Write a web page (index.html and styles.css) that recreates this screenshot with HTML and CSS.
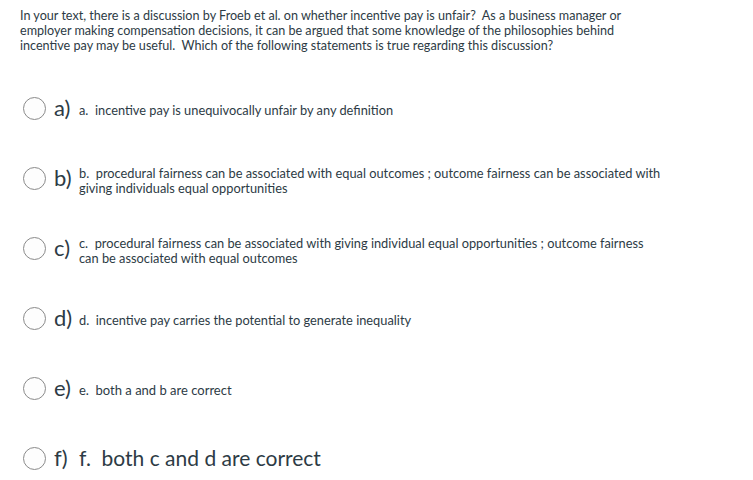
FILE: index.html
```html
<!DOCTYPE html>
<html lang="en">
<head>
<meta charset="utf-8">
<title>Question</title>
<link rel="stylesheet" href="styles.css">
</head>
<body>
<div class="question">
  <p class="stem">In your text, there is a discussion by Froeb et al. on whether incentive pay is unfair?&nbsp; As a business manager or employer making compensation decisions, it can be argued that some knowledge of the philosophies behind incentive pay may be useful.&nbsp; Which of the following statements is true regarding this discussion?</p>
  <ul class="answers">
    <li class="answer"><span class="radio"></span><span class="letter">a)</span><span class="text">a.&nbsp; incentive pay is unequivocally unfair by any definition</span></li>
    <li class="answer"><span class="radio"></span><span class="letter">b)</span><span class="text">b.&nbsp; procedural fairness can be associated with equal outcomes ; outcome fairness can be associated with giving individuals equal opportunities</span></li>
    <li class="answer"><span class="radio"></span><span class="letter">c)</span><span class="text">c.&nbsp; procedural fairness can be associated with giving individual equal opportunities ; outcome fairness can be associated with equal outcomes</span></li>
    <li class="answer"><span class="radio"></span><span class="letter">d)</span><span class="text">d.&nbsp; incentive pay carries the potential to generate inequality</span></li>
    <li class="answer"><span class="radio"></span><span class="letter">e)</span><span class="text text-lato">e.&nbsp; both a and b are correct</span></li>
    <li class="answer"><span class="radio"></span><span class="letter">f)</span><span class="text text-large">f.&nbsp; both c and d are correct</span></li>
  </ul>
</div>
</body>
</html>
```

FILE: styles.css
```css
* { box-sizing: border-box; }
body {
  margin: 0;
  background: #ffffff;
  color: #2d3b45;
  font-family: "Lato", "Liberation Sans", sans-serif;
}
.question {
  padding: 8px 20px 0 20px;
}
.stem {
  margin: 0;
  width: 632px;
  font-size: 12.6px;
  line-height: 15px;
}
.answers {
  list-style: none;
  margin: 20px 0 0 0;
  padding: 0;
}
.answer {
  display: flex;
  align-items: center;
  height: 70px;
}
.radio {
  flex: none;
  width: 23px;
  height: 23px;
  margin-left: 3px;
  border: 1px solid #8a8a8a;
  border-radius: 50%;
  background: #fdfdfd;
}
.letter {
  flex: none;
  margin-left: 8px;
  width: 25px;
  font-size: 22px;
  line-height: 24px;
}
.text {
  width: 586px;
  padding-top: 5px;
  font-size: 12.8px;
  line-height: 15px;
}
.text-lato {
  font-size: 13px;
}
.text-large {
  padding-top: 0;
  font-size: 21px;
  line-height: 24px;
}
```
